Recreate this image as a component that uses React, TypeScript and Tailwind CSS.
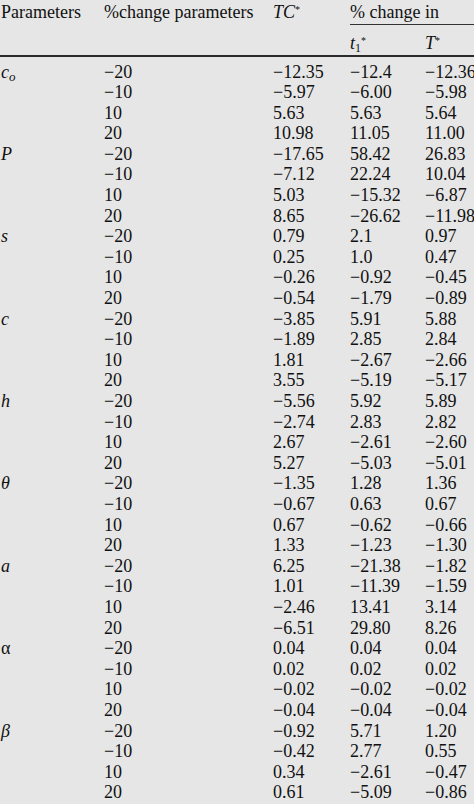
import React from "react";

type Block = {
  label: React.ReactNode;
  rows: [string, string, string, string][];
};

const blocks: Block[] = [
  {
    label: (
      <>
        <i>c</i>
        <sub className="text-[13px] italic">o</sub>
      </>
    ),
    rows: [
      ["−20", "−12.35", "−12.4", "−12.36"],
      ["−10", "−5.97", "−6.00", "−5.98"],
      ["10", "5.63", "5.63", "5.64"],
      ["20", "10.98", "11.05", "11.00"],
    ],
  },
  {
    label: <i>P</i>,
    rows: [
      ["−20", "−17.65", "58.42", "26.83"],
      ["−10", "−7.12", "22.24", "10.04"],
      ["10", "5.03", "−15.32", "−6.87"],
      ["20", "8.65", "−26.62", "−11.98"],
    ],
  },
  {
    label: <i>s</i>,
    rows: [
      ["−20", "0.79", "2.1", "0.97"],
      ["−10", "0.25", "1.0", "0.47"],
      ["10", "−0.26", "−0.92", "−0.45"],
      ["20", "−0.54", "−1.79", "−0.89"],
    ],
  },
  {
    label: <i>c</i>,
    rows: [
      ["−20", "−3.85", "5.91", "5.88"],
      ["−10", "−1.89", "2.85", "2.84"],
      ["10", "1.81", "−2.67", "−2.66"],
      ["20", "3.55", "−5.19", "−5.17"],
    ],
  },
  {
    label: <i>h</i>,
    rows: [
      ["−20", "−5.56", "5.92", "5.89"],
      ["−10", "−2.74", "2.83", "2.82"],
      ["10", "2.67", "−2.61", "−2.60"],
      ["20", "5.27", "−5.03", "−5.01"],
    ],
  },
  {
    label: <i>θ</i>,
    rows: [
      ["−20", "−1.35", "1.28", "1.36"],
      ["−10", "−0.67", "0.63", "0.67"],
      ["10", "0.67", "−0.62", "−0.66"],
      ["20", "1.33", "−1.23", "−1.30"],
    ],
  },
  {
    label: <i>a</i>,
    rows: [
      ["−20", "6.25", "−21.38", "−1.82"],
      ["−10", "1.01", "−11.39", "−1.59"],
      ["10", "−2.46", "13.41", "3.14"],
      ["20", "−6.51", "29.80", "8.26"],
    ],
  },
  {
    label: <span>α</span>,
    rows: [
      ["−20", "0.04", "0.04", "0.04"],
      ["−10", "0.02", "0.02", "0.02"],
      ["10", "−0.02", "−0.02", "−0.02"],
      ["20", "−0.04", "−0.04", "−0.04"],
    ],
  },
  {
    label: <i>β</i>,
    rows: [
      ["−20", "−0.92", "5.71", "1.20"],
      ["−10", "−0.42", "2.77", "0.55"],
      ["10", "0.34", "−2.61", "−0.47"],
      ["20", "0.61", "−5.09", "−0.86"],
    ],
  },
];

const cols = "grid grid-cols-[103px_169px_77px_75px_1fr]";

const App = () => {
  return (
    <div
      className="h-[804px] w-[474px] overflow-hidden whitespace-nowrap bg-[#e6e6e6] text-[18px] text-[#111]"
      style={{ fontFamily: '"Liberation Serif", "Times New Roman", serif' }}
    >
      {/* header */}
      <div className={`${cols} grid-rows-[25px_30px] pl-px`}>
        <div className="pt-[2px] leading-[20px]">Parameters</div>
        <div className="pt-[2px] leading-[20px]">%change parameters</div>
        <div className="pt-[2px] leading-[20px]">
          <i>TC</i>
          <sup className="text-[10px]">*</sup>
        </div>
        <div className="col-span-2 border-b border-[#333] pt-[2px] leading-[20px]">
          % change in
        </div>
        <div className="col-start-4 pt-[8px] leading-[20px]">
          <i>t</i>
          <sub className="text-[12px]">1</sub>
          <sup className="text-[10px]">*</sup>
        </div>
        <div className="pt-[8px] leading-[20px]">
          <i>T</i>
          <sup className="text-[10px]">*</sup>
        </div>
      </div>
      <div className="h-[1.5px] bg-[#2a2a2a]" />

      {/* body */}
      <div className="pt-[5px] pl-px">
        {blocks.map((b, bi) =>
          b.rows.map((r, ri) => (
            <div key={`${bi}-${ri}`} className={`${cols} h-[20.6px] leading-[20.6px]`}>
              <div>{ri === 0 ? b.label : null}</div>
              <div>{r[0]}</div>
              <div>{r[1]}</div>
              <div>{r[2]}</div>
              <div>{r[3]}</div>
            </div>
          ))
        )}
      </div>
    </div>
  );
};

export default App;
